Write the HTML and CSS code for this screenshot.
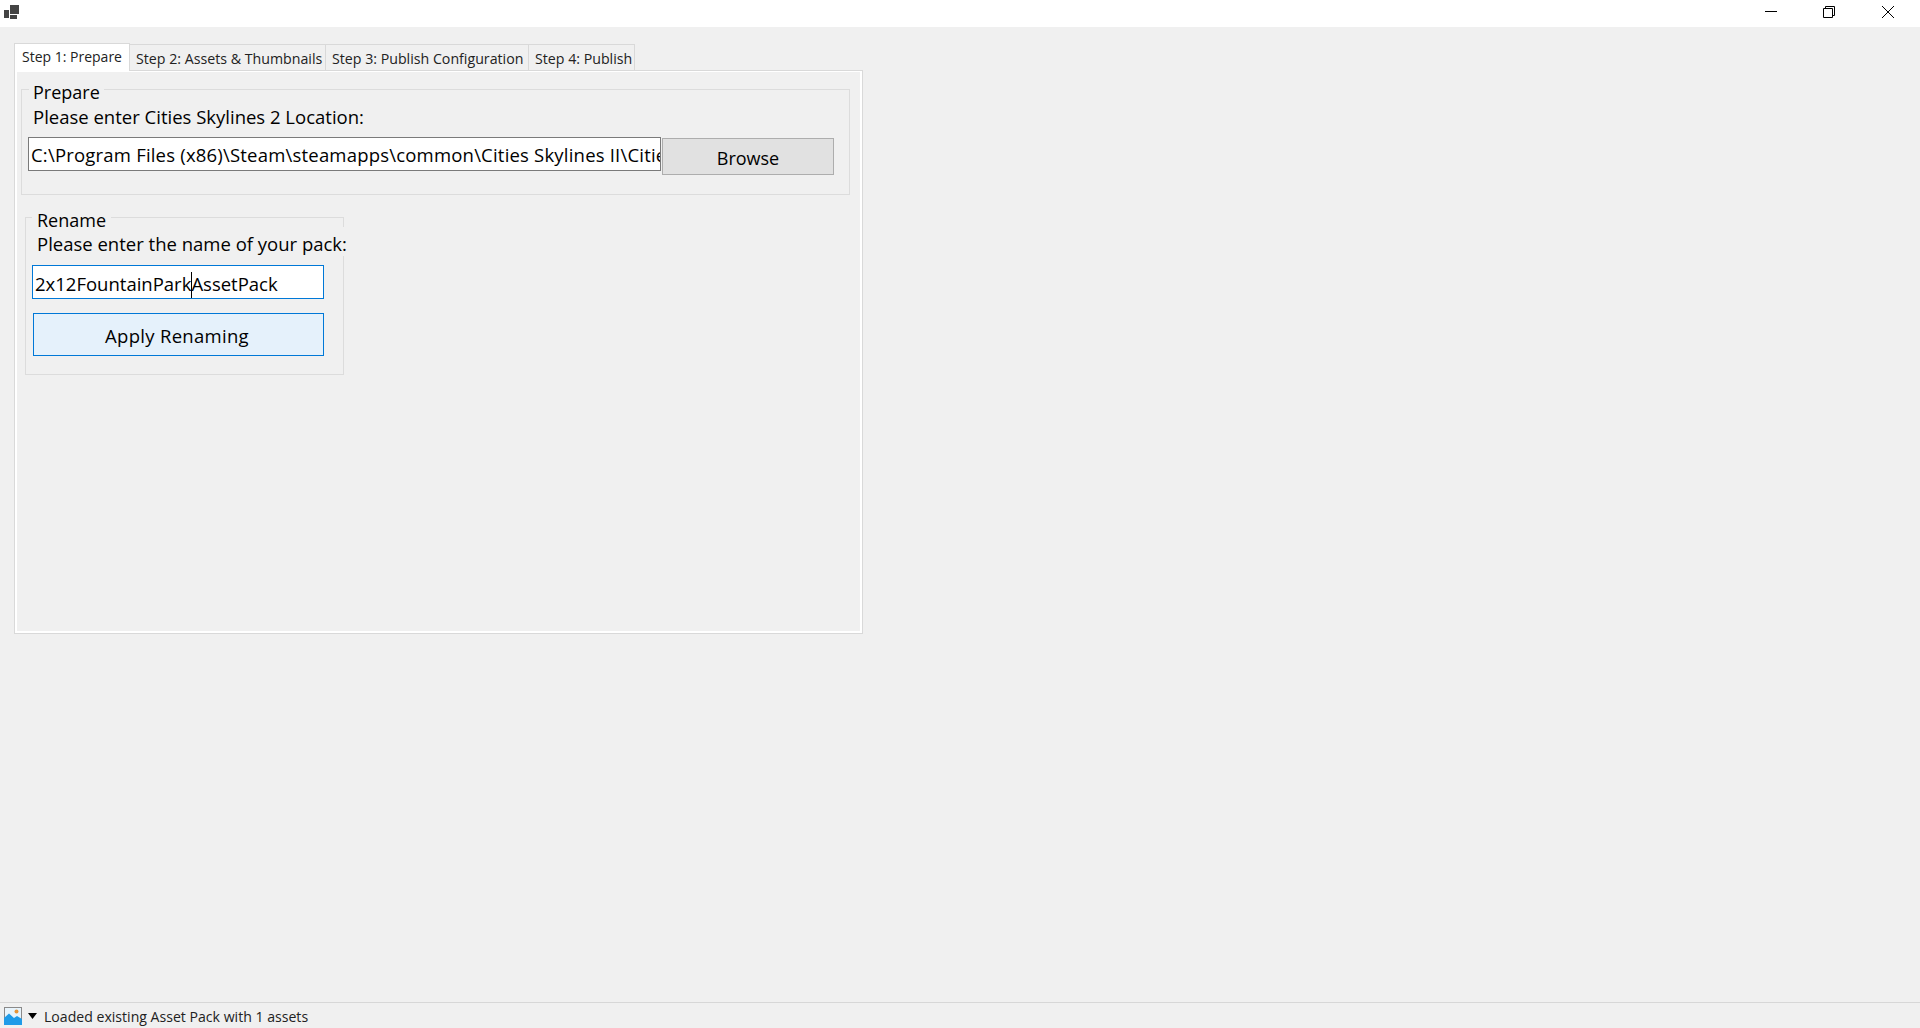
FILE: index.html
```html
<!DOCTYPE html>
<html lang="en">
<head>
<meta charset="utf-8">
<title>Asset Pack Publisher</title>
<link rel="stylesheet" href="styles.css">
</head>
<body>
<div class="window">
  <header class="titlebar">
    <svg class="app-icon" width="20" height="20" viewBox="0 0 20 20"><rect x="4" y="9" width="5" height="8" fill="#444"/><rect x="10" y="4" width="9" height="9" fill="#444"/><rect x="10" y="14" width="7" height="4" fill="#444"/></svg>
    <div class="controls">
      <div class="control"><svg width="14" height="14" viewBox="0 0 14 14"><path d="M1 6.5H13" stroke="#000" fill="none"/></svg></div>
      <div class="control"><svg width="14" height="14" viewBox="0 0 14 14"><path d="M1.5 3.5H10.5V12.5H1.5ZM3.5 3.5V1.500H12.500V10.500H10.500" stroke="#000" fill="none"/></svg></div>
      <div class="control"><svg width="14" height="14" viewBox="0 0 14 14"><path d="M1 1L13 13M13 1L1 13" stroke="#000" fill="none"/></svg></div>
    </div>
  </header>
  <main class="content">
    <nav class="tabs">
      <div class="tab tab-active tab-1">Step 1: Prepare</div>
      <div class="tab tab-2">Step 2: Assets &amp; Thumbnails</div>
      <div class="tab tab-3">Step 3: Publish Configuration</div>
      <div class="tab tab-4">Step 4: Publish</div>
    </nav>
    <section class="panel">
      <div class="group group-prepare">
        <div class="legend">Prepare</div>
        <div class="label label-prepare">Please enter Cities Skylines 2 Location:</div>
        <div class="path-row">
          <div class="input input-path">C:\Program Files (x86)\Steam\steamapps\common\Cities Skylines II\Cities</div>
          <div class="button button-browse">Browse</div>
        </div>
      </div>
      <div class="group group-rename">
        <div class="legend">Rename</div>
        <div class="label label-rename">Please enter the name of your pack:</div>
        <div class="input input-name">2x12FountainPark<span class="caret"></span>AssetPack</div>
        <div class="button button-apply">Apply Renaming</div>
      </div>
    </section>
  </main>
  <footer class="statusbar">
    <svg class="status-image" width="18" height="18" viewBox="0 0 18 18"><rect width="18" height="18" fill="#8a8a8a"/><rect x="1" y="1" width="16" height="16" fill="#e8f4fc"/><path d="M0 18V11L5 6.500L10 11L13 9L18 12V18Z" fill="#1f9be8"/><circle cx="12.500" cy="4.500" r="2" fill="#e8963a"/></svg>
    <svg class="status-arrow" width="9" height="6" viewBox="0 0 9 6"><path d="M0 0H9L4.500 6Z" fill="#000"/></svg>
    <span class="status-text">Loaded existing Asset Pack with 1 assets</span>
  </footer>
</div>
</body>
</html>
```
FILE: styles.css
```css
* { box-sizing: border-box; }
html, body { margin: 0; padding: 0; height: 100%; }
body {
  background: #f0f0f0;
  color: #000;
  font-family: "Open Sans", "Noto Sans", "Liberation Sans", sans-serif;
  overflow: hidden;
}
.window { display: flex; flex-direction: column; height: 100vh; }

.titlebar {
  flex: none;
  height: 27px;
  background: #fff;
  display: flex;
  justify-content: space-between;
  align-items: flex-start;
}
.app-icon { display: block; margin-top: 1px; }
.controls { display: flex; margin-right: 3px; }
.control { width: 58.500px; height: 27px; display: flex; justify-content: center; padding-top: 5px; }

.content { flex: 1; padding: 16px 0 0 14px; min-height: 0; }

.tabs { display: flex; align-items: flex-end; height: 27px; font-size: 14.200px; line-height: 27px; color: #222; }
.tab {
  height: 26px;
  border: 1px solid #d9d9d9;
  border-bottom: none;
  border-left: none;
  padding-left: 6px;
  white-space: nowrap;
}
.tab-active {
  position: relative;
  height: 28px;
  margin-bottom: -1px;
  background: #fff;
  border-left: 1px solid #d9d9d9;
  font-size: 14px;
  line-height: 26px;
  padding-left: 7px;
}
.tab-1 { width: 116px; }
.tab-2 { width: 196px; }
.tab-3 { width: 203px; }
.tab-4 { width: 106px; }

.panel {
  width: 849px;
  height: 564px;
  border: 1px solid #d9d9d9;
  box-shadow: inset 2px 1px 0 #fff, inset -2px -2px 0 #fff;
  padding: 18px 0 0 6px;
}

.group { border: 1px solid #dcdcdc; font-size: 18px; line-height: 24px; }
.group-prepare { width: 829px; height: 106px; }
.group-rename { width: 319px; height: 158px; margin-top: 22px; margin-left: 4px; }

.legend { width: fit-content; background: #f0f0f0; white-space: nowrap; margin-top: -10px; }
.group-prepare .legend { margin-left: 7px; padding: 0 4px; }
.group-rename .legend { margin-left: 6px; padding: 0 5px; }

.label { white-space: nowrap; font-size: 18.500px; }
.label-prepare { margin: 1px 0 0 11px; }
.label-rename { width: 308px; margin: -5px 0 0 11px; padding-top: 5px; background: #f0f0f0; }

.path-row { display: flex; align-items: flex-start; margin: 8px 0 0 6px; }

.input {
  height: 34px;
  background: #fff;
  border: 1px solid #7a7a7a;
  font-size: 18.500px;
  line-height: 34px;
  padding-left: 2px;
  white-space: nowrap;
  overflow: hidden;
}
.input-path { width: 633px; letter-spacing: 0.200px; }
.input-name { width: 292px; margin: 9px 0 0 6px; border-color: #0078d7; line-height: 35px; }
.caret { display: inline-block; width: 1px; height: 28px; margin-right: -1px; background: #000; vertical-align: middle; }

.button { display: flex; align-items: center; justify-content: center; border: 1px solid; }
.button-browse { width: 172px; height: 37px; margin: 1px 0 0 1px; padding-top: 3px; background: #e1e1e1; border-color: #adadad; }
.button-apply { width: 291px; height: 43px; margin: 14px 0 0 7px; padding: 3px 3px 0 0; font-size: 18.500px; letter-spacing: 0.300px; background: #e5f1fb; border-color: #0078d7; }

.statusbar {
  flex: none;
  height: 26px;
  border-top: 1px solid #d7d7d7;
  display: flex;
  align-items: center;
  padding-left: 4px;
  font-size: 14.100px;
  color: #222;
}
.status-image { display: block; }
.status-arrow { display: block; margin-left: 6px; }
.status-text { margin-left: 7px; padding-top: 1px; white-space: nowrap; }
```
